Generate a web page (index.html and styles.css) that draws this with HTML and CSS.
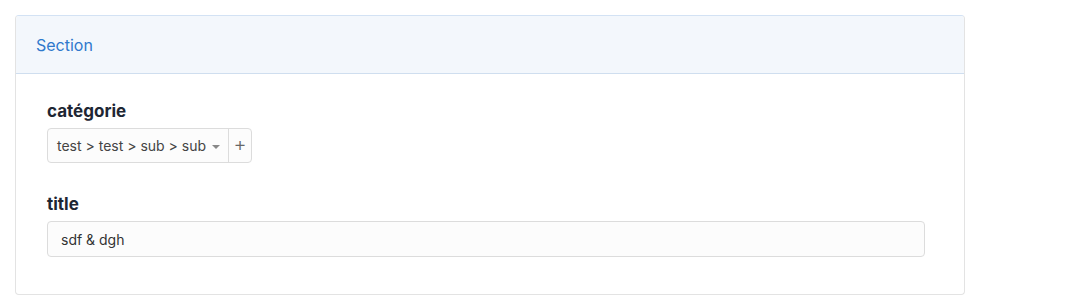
FILE: index.html
```html
<!DOCTYPE html>
<html lang="fr">
<head>
<meta charset="utf-8">
<link rel="stylesheet" href="styles.css">
</head>
<body>
<div class="card">
  <div class="card-header">Section</div>
  <div class="card-body">
    <div class="field">
      <label class="label">catégorie</label>
      <div class="select-group">
        <div class="select">
          <span class="select-text">test &gt; test &gt; sub &gt; sub</span>
          <span class="caret"></span>
        </div>
        <div class="add-btn">+</div>
      </div>
    </div>
    <div class="field">
      <label class="label">title</label>
      <div class="input">sdf &amp; dgh</div>
    </div>
  </div>
</div>
</body>
</html>
```
FILE: styles.css
```css
html, body {
  margin: 0;
  padding: 0;
  background: #fff;
}
body {
  padding: 15px;
  font-family: Inter, "Noto Sans", sans-serif;
}
.card {
  width: 948px;
  border: 1px solid #e3e3e3;
  border-top-color: #d3e2f4;
  border-radius: 4px;
  background: #fff;
}
.card-header {
  height: 58px;
  box-sizing: border-box;
  padding: 0 20px;
  display: flex;
  align-items: center;
  background: #f3f7fc;
  border-bottom: 1px solid #cfdeef;
  color: #2f79cc;
  font-size: 16px;
  border-radius: 4px 4px 0 0;
}
.card-body {
  padding: 26px 39px 37px 31px;
  display: flex;
  flex-direction: column;
  gap: 30px;
}
.field {
  display: flex;
  flex-direction: column;
}
.label {
  font-size: 17px;
  font-weight: 700;
  color: #1e2633;
  line-height: 22px;
  margin-bottom: 6px;
}
.select-group {
  display: flex;
  align-self: flex-start;
  height: 35px;
  box-sizing: border-box;
  border: 1px solid #dcdcdc;
  border-radius: 4px;
  background: #fcfcfc;
}
.select {
  display: flex;
  align-items: center;
  padding: 0 8px 0 9px;
  color: #444;
  font-size: 14px;
}
.caret {
  width: 0;
  height: 0;
  border-left: 4px solid transparent;
  border-right: 4px solid transparent;
  border-top: 4px solid #888;
  margin-left: 6px;
  margin-top: 2px;
}
.add-btn {
  width: 23px;
  border-left: 1px solid #dcdcdc;
  display: flex;
  align-items: center;
  justify-content: center;
  color: #666;
  font-size: 20px;
  font-weight: 300;
  padding-bottom: 4px;
  box-sizing: border-box;
}
.input {
  height: 36px;
  box-sizing: border-box;
  border: 1px solid #dcdcdc;
  border-radius: 4px;
  background: #fcfcfc;
  display: flex;
  align-items: center;
  padding: 0 13px;
  color: #333;
  font-size: 14px;
}
```
